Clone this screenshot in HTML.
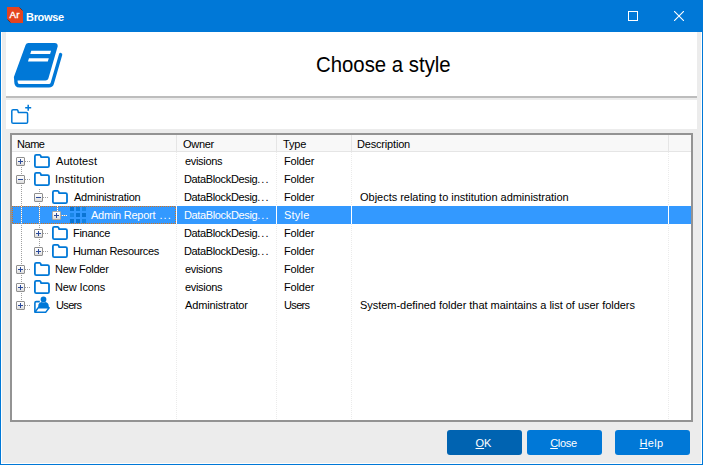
<!DOCTYPE html>
<html><head><meta charset="utf-8"><style>
*{margin:0;padding:0;box-sizing:border-box}
html,body{width:703px;height:465px;overflow:hidden;background:#ececec}
body{position:relative;font-family:"Liberation Sans",sans-serif;font-size:11px;color:#000}
.a{position:absolute}
#win{position:absolute;left:0;top:0;width:703px;height:465px;border:1px solid #0078d7;background:#ececec}
#tb{position:absolute;left:0;top:0;width:703px;height:32px;background:#0078d7}
.t{position:absolute;height:18px;line-height:18px;white-space:nowrap;color:#000}
.t.sel{color:#fff}
.h1{position:absolute;white-space:nowrap;line-height:17px;height:17px}
.ic{position:absolute;display:block}
.exp{position:absolute;width:9px;height:9px;border:1px solid #8f8f8f;border-radius:1px;background:linear-gradient(#ffffff,#f2f2f2 50%,#dcdcdc)}
.exp i{position:absolute;background:#2b4a9a;display:block}
.exp i.h{left:1px;top:3px;width:5px;height:1px}
.exp i.v{left:3px;top:1px;width:1px;height:5px}
.btn{position:absolute;top:430px;width:75px;height:25px;border-radius:3px;background:#0078d7;color:#fff;text-align:center;line-height:27px;font-size:11px}
.btn u{text-decoration:underline;text-underline-offset:1px}
</style></head><body>
<div id="win"></div>
<div id="tb"></div>
<div class="a" style="left:1px;top:32px;width:701px;height:432px;background:#fff"></div>
<div class="a" style="left:2px;top:32px;width:699px;height:431px;background:#ececec"></div>
<!-- header white -->
<div class="a" style="left:6px;top:32px;width:691px;height:64px;background:#fff"></div>
<div class="a" style="left:6px;top:96px;width:691px;height:2px;background:#bdbdbd"></div>
<div class="a" style="left:6px;top:98px;width:691px;height:2px;background:#ececec"></div>
<div class="a" style="left:6px;top:100px;width:691px;height:29px;background:#fff"></div>
<!-- title bar content -->
<svg class="ic" style="left:7px;top:7px" width="16" height="16" viewBox="0 0 16 16"><path d="M0 0 L12 0 L16 4 L16 16 L4 16 L0 12 Z" fill="#e4431f"/><path d="M12.5 0.5 L15.5 3.5 M0.5 12.5 L3.5 15.5" stroke="#3a1a10" stroke-width="0.7" opacity="0.8"/><text x="2.6" y="11.4" font-family="Liberation Sans" font-weight="normal" font-size="9.8" stroke="#fff" stroke-width="0.35" fill="#fff">Ar</text></svg>
<div class="a" style="left:26px;top:10px;color:#fff;font-weight:bold;font-size:11px;letter-spacing:-0.3px;line-height:14px">Browse</div>
<div class="a" style="left:628px;top:11px;width:10px;height:10px;border:1px solid #fff"></div>
<svg class="ic" style="left:674px;top:11px" width="10" height="10" viewBox="0 0 10 10"><path d="M0 0 L10 10 M10 0 L0 10" stroke="#fff" stroke-width="1.1"/></svg>
<!-- book icon -->
<svg class="ic" style="left:0px;top:32px" width="80" height="64" viewBox="0 32 80 64">
<path d="M28.4 46 L54.7 46 L45.5 77.6 L16.9 77.6 Z" fill="#0078d7" stroke="#0078d7" stroke-width="6" stroke-linejoin="round"/>
<path d="M60.6 54.6 L52.3 83.2 Q51.6 85.8 49 85.8 L19.5 85.8 Q15.9 85.8 15.9 81.5 L15.9 78" fill="none" stroke="#0078d7" stroke-width="3.4" stroke-linecap="round" stroke-linejoin="round"/>
<path d="M30.8 52.4 L50.6 52.4" stroke="#fff" stroke-width="3.2" stroke-linecap="butt" transform="skewX(-17) translate(16 0)"/>
<path d="M30.8 59.9 L50.6 59.9" stroke="#fff" stroke-width="3.2" stroke-linecap="butt" transform="skewX(-17) translate(16 0)"/>
</svg>
<div class="a" style="left:316px;top:52px;font-size:22.5px;transform:scaleX(0.905);transform-origin:0 0;line-height:26px;white-space:nowrap">Choose a style</div>
<!-- new folder icon -->
<svg class="ic" style="left:8px;top:100px" width="28" height="28" viewBox="0 0 28 28">
<path d="M3.8 11 Q3.8 9.7 5.1 9.7 L8.7 9.7 Q9.6 9.7 9.9 10.6 L10.3 12.4 L18.3 12.4 Q19.6 12.4 19.6 13.7 L19.6 21.9 Q19.6 23.2 18.3 23.2 L5.1 23.2 Q3.8 23.2 3.8 21.9 Z" fill="none" stroke="#0078d7" stroke-width="1.5" stroke-linejoin="round"/>
<path d="M17.2 7.8 L23.2 7.8 M20.2 4.8 L20.2 10.8" stroke="#0078d7" stroke-width="1.5"/>
</svg>
<!-- listbox -->
<div class="a" style="left:10px;top:133px;width:683px;height:289px;border:2px solid #939393;background:#fff"></div>
<div class="a" style="left:12px;top:135px;width:679px;height:16px;background:#f8f8f8"></div>
<div class="a" style="left:12px;top:151px;width:679px;height:1px;background:#e5e5e5"></div>
<div class="a" style="left:176px;top:135px;width:1px;height:17px;background:#e5e5e5"></div>
<div class="a" style="left:276px;top:135px;width:1px;height:17px;background:#e5e5e5"></div>
<div class="a" style="left:351px;top:135px;width:1px;height:17px;background:#e5e5e5"></div>
<div class="a" style="left:668px;top:135px;width:1px;height:17px;background:#e5e5e5"></div>
<div class="h1" style="left:17px;top:136px;letter-spacing:-0.467px">Name</div>
<div class="h1" style="left:183px;top:136px;letter-spacing:-0.3px">Owner</div>
<div class="h1" style="left:283px;top:136px;letter-spacing:-0.201px">Type</div>
<div class="h1" style="left:357px;top:136px;letter-spacing:-0.18px">Description</div>
<!-- column dotted lines -->
<div class="a" style="left:176px;top:152px;width:1px;height:268px;background:repeating-linear-gradient(#ebebeb 0 1px,transparent 1px 2px)"></div>
<div class="a" style="left:276px;top:152px;width:1px;height:268px;background:repeating-linear-gradient(#ebebeb 0 1px,transparent 1px 2px)"></div>
<div class="a" style="left:351px;top:152px;width:1px;height:268px;background:repeating-linear-gradient(#ebebeb 0 1px,transparent 1px 2px)"></div>
<div class="a" style="left:668px;top:152px;width:1px;height:268px;background:repeating-linear-gradient(#ebebeb 0 1px,transparent 1px 2px)"></div>
<!-- selection -->
<div class="a" style="left:12px;top:206px;width:679px;height:18px;background:#3399ff"></div>
<div class="a" style="left:176px;top:206px;width:1px;height:18px;background:#fff"></div>
<div class="a" style="left:276px;top:206px;width:1px;height:18px;background:#fff"></div>
<div class="a" style="left:351px;top:206px;width:1px;height:18px;background:#fff"></div>
<div class="a" style="left:668px;top:206px;width:1px;height:18px;background:#fff"></div>
<svg class="ic" style="left:0;top:0" width="703" height="465"><rect x="25" y="161" width="1" height="1" fill="#a0a0a0"/><rect x="27" y="161" width="1" height="1" fill="#a0a0a0"/><rect x="29" y="161" width="1" height="1" fill="#a0a0a0"/><rect x="25" y="179" width="1" height="1" fill="#a0a0a0"/><rect x="27" y="179" width="1" height="1" fill="#a0a0a0"/><rect x="29" y="179" width="1" height="1" fill="#a0a0a0"/><rect x="43" y="197" width="1" height="1" fill="#a0a0a0"/><rect x="45" y="197" width="1" height="1" fill="#a0a0a0"/><rect x="47" y="197" width="1" height="1" fill="#a0a0a0"/><rect x="61" y="215" width="1" height="1" fill="#a0a0a0"/><rect x="63" y="215" width="1" height="1" fill="#a0a0a0"/><rect x="65" y="215" width="1" height="1" fill="#a0a0a0"/><rect x="62" y="215" width="1" height="1" fill="#fff"/><rect x="64" y="215" width="1" height="1" fill="#fff"/><rect x="66" y="215" width="1" height="1" fill="#fff"/><rect x="43" y="233" width="1" height="1" fill="#a0a0a0"/><rect x="45" y="233" width="1" height="1" fill="#a0a0a0"/><rect x="47" y="233" width="1" height="1" fill="#a0a0a0"/><rect x="43" y="251" width="1" height="1" fill="#a0a0a0"/><rect x="45" y="251" width="1" height="1" fill="#a0a0a0"/><rect x="47" y="251" width="1" height="1" fill="#a0a0a0"/><rect x="25" y="269" width="1" height="1" fill="#a0a0a0"/><rect x="27" y="269" width="1" height="1" fill="#a0a0a0"/><rect x="29" y="269" width="1" height="1" fill="#a0a0a0"/><rect x="25" y="287" width="1" height="1" fill="#a0a0a0"/><rect x="27" y="287" width="1" height="1" fill="#a0a0a0"/><rect x="29" y="287" width="1" height="1" fill="#a0a0a0"/><rect x="25" y="305" width="1" height="1" fill="#a0a0a0"/><rect x="27" y="305" width="1" height="1" fill="#a0a0a0"/><rect x="29" y="305" width="1" height="1" fill="#a0a0a0"/><rect x="12" y="206" width="1" height="1" fill="#d4731c"/><rect x="13" y="223" width="1" height="1" fill="#d4731c"/><rect x="14" y="206" width="1" height="1" fill="#d4731c"/><rect x="15" y="223" width="1" height="1" fill="#d4731c"/><rect x="16" y="206" width="1" height="1" fill="#d4731c"/><rect x="17" y="223" width="1" height="1" fill="#d4731c"/><rect x="18" y="206" width="1" height="1" fill="#d4731c"/><rect x="19" y="223" width="1" height="1" fill="#d4731c"/><rect x="20" y="206" width="1" height="1" fill="#d4731c"/><rect x="21" y="223" width="1" height="1" fill="#d4731c"/><rect x="22" y="206" width="1" height="1" fill="#d4731c"/><rect x="23" y="223" width="1" height="1" fill="#d4731c"/><rect x="24" y="206" width="1" height="1" fill="#d4731c"/><rect x="25" y="223" width="1" height="1" fill="#d4731c"/><rect x="26" y="206" width="1" height="1" fill="#d4731c"/><rect x="27" y="223" width="1" height="1" fill="#d4731c"/><rect x="28" y="206" width="1" height="1" fill="#d4731c"/><rect x="29" y="223" width="1" height="1" fill="#d4731c"/><rect x="30" y="206" width="1" height="1" fill="#d4731c"/><rect x="31" y="223" width="1" height="1" fill="#d4731c"/><rect x="32" y="206" width="1" height="1" fill="#d4731c"/><rect x="33" y="223" width="1" height="1" fill="#d4731c"/><rect x="34" y="206" width="1" height="1" fill="#d4731c"/><rect x="35" y="223" width="1" height="1" fill="#d4731c"/><rect x="36" y="206" width="1" height="1" fill="#d4731c"/><rect x="37" y="223" width="1" height="1" fill="#d4731c"/><rect x="38" y="206" width="1" height="1" fill="#d4731c"/><rect x="39" y="223" width="1" height="1" fill="#d4731c"/><rect x="40" y="206" width="1" height="1" fill="#d4731c"/><rect x="41" y="223" width="1" height="1" fill="#d4731c"/><rect x="42" y="206" width="1" height="1" fill="#d4731c"/><rect x="43" y="223" width="1" height="1" fill="#d4731c"/><rect x="44" y="206" width="1" height="1" fill="#d4731c"/><rect x="45" y="223" width="1" height="1" fill="#d4731c"/><rect x="46" y="206" width="1" height="1" fill="#d4731c"/><rect x="47" y="223" width="1" height="1" fill="#d4731c"/><rect x="48" y="206" width="1" height="1" fill="#d4731c"/><rect x="49" y="223" width="1" height="1" fill="#d4731c"/><rect x="50" y="206" width="1" height="1" fill="#d4731c"/><rect x="51" y="223" width="1" height="1" fill="#d4731c"/><rect x="52" y="206" width="1" height="1" fill="#d4731c"/><rect x="53" y="223" width="1" height="1" fill="#d4731c"/><rect x="54" y="206" width="1" height="1" fill="#d4731c"/><rect x="55" y="223" width="1" height="1" fill="#d4731c"/><rect x="56" y="206" width="1" height="1" fill="#d4731c"/><rect x="57" y="223" width="1" height="1" fill="#d4731c"/><rect x="58" y="206" width="1" height="1" fill="#d4731c"/><rect x="59" y="223" width="1" height="1" fill="#d4731c"/><rect x="60" y="206" width="1" height="1" fill="#d4731c"/><rect x="61" y="223" width="1" height="1" fill="#d4731c"/><rect x="62" y="206" width="1" height="1" fill="#d4731c"/><rect x="63" y="223" width="1" height="1" fill="#d4731c"/><rect x="64" y="206" width="1" height="1" fill="#d4731c"/><rect x="65" y="223" width="1" height="1" fill="#d4731c"/><rect x="66" y="206" width="1" height="1" fill="#d4731c"/><rect x="67" y="223" width="1" height="1" fill="#d4731c"/><rect x="68" y="206" width="1" height="1" fill="#d4731c"/><rect x="69" y="223" width="1" height="1" fill="#d4731c"/><rect x="70" y="206" width="1" height="1" fill="#d4731c"/><rect x="71" y="223" width="1" height="1" fill="#d4731c"/><rect x="72" y="206" width="1" height="1" fill="#d4731c"/><rect x="73" y="223" width="1" height="1" fill="#d4731c"/><rect x="74" y="206" width="1" height="1" fill="#d4731c"/><rect x="75" y="223" width="1" height="1" fill="#d4731c"/><rect x="76" y="206" width="1" height="1" fill="#d4731c"/><rect x="77" y="223" width="1" height="1" fill="#d4731c"/><rect x="78" y="206" width="1" height="1" fill="#d4731c"/><rect x="79" y="223" width="1" height="1" fill="#d4731c"/><rect x="80" y="206" width="1" height="1" fill="#d4731c"/><rect x="81" y="223" width="1" height="1" fill="#d4731c"/><rect x="82" y="206" width="1" height="1" fill="#d4731c"/><rect x="83" y="223" width="1" height="1" fill="#d4731c"/><rect x="84" y="206" width="1" height="1" fill="#d4731c"/><rect x="85" y="223" width="1" height="1" fill="#d4731c"/><rect x="86" y="206" width="1" height="1" fill="#d4731c"/><rect x="87" y="223" width="1" height="1" fill="#d4731c"/><rect x="88" y="206" width="1" height="1" fill="#d4731c"/><rect x="89" y="223" width="1" height="1" fill="#d4731c"/><rect x="90" y="206" width="1" height="1" fill="#d4731c"/><rect x="91" y="223" width="1" height="1" fill="#d4731c"/><rect x="92" y="206" width="1" height="1" fill="#d4731c"/><rect x="93" y="223" width="1" height="1" fill="#d4731c"/><rect x="94" y="206" width="1" height="1" fill="#d4731c"/><rect x="95" y="223" width="1" height="1" fill="#d4731c"/><rect x="96" y="206" width="1" height="1" fill="#d4731c"/><rect x="97" y="223" width="1" height="1" fill="#d4731c"/><rect x="98" y="206" width="1" height="1" fill="#d4731c"/><rect x="99" y="223" width="1" height="1" fill="#d4731c"/><rect x="100" y="206" width="1" height="1" fill="#d4731c"/><rect x="101" y="223" width="1" height="1" fill="#d4731c"/><rect x="102" y="206" width="1" height="1" fill="#d4731c"/><rect x="103" y="223" width="1" height="1" fill="#d4731c"/><rect x="104" y="206" width="1" height="1" fill="#d4731c"/><rect x="105" y="223" width="1" height="1" fill="#d4731c"/><rect x="106" y="206" width="1" height="1" fill="#d4731c"/><rect x="107" y="223" width="1" height="1" fill="#d4731c"/><rect x="108" y="206" width="1" height="1" fill="#d4731c"/><rect x="109" y="223" width="1" height="1" fill="#d4731c"/><rect x="110" y="206" width="1" height="1" fill="#d4731c"/><rect x="111" y="223" width="1" height="1" fill="#d4731c"/><rect x="112" y="206" width="1" height="1" fill="#d4731c"/><rect x="113" y="223" width="1" height="1" fill="#d4731c"/><rect x="114" y="206" width="1" height="1" fill="#d4731c"/><rect x="115" y="223" width="1" height="1" fill="#d4731c"/><rect x="116" y="206" width="1" height="1" fill="#d4731c"/><rect x="117" y="223" width="1" height="1" fill="#d4731c"/><rect x="118" y="206" width="1" height="1" fill="#d4731c"/><rect x="119" y="223" width="1" height="1" fill="#d4731c"/><rect x="120" y="206" width="1" height="1" fill="#d4731c"/><rect x="121" y="223" width="1" height="1" fill="#d4731c"/><rect x="122" y="206" width="1" height="1" fill="#d4731c"/><rect x="123" y="223" width="1" height="1" fill="#d4731c"/><rect x="124" y="206" width="1" height="1" fill="#d4731c"/><rect x="125" y="223" width="1" height="1" fill="#d4731c"/><rect x="126" y="206" width="1" height="1" fill="#d4731c"/><rect x="127" y="223" width="1" height="1" fill="#d4731c"/><rect x="128" y="206" width="1" height="1" fill="#d4731c"/><rect x="129" y="223" width="1" height="1" fill="#d4731c"/><rect x="130" y="206" width="1" height="1" fill="#d4731c"/><rect x="131" y="223" width="1" height="1" fill="#d4731c"/><rect x="132" y="206" width="1" height="1" fill="#d4731c"/><rect x="133" y="223" width="1" height="1" fill="#d4731c"/><rect x="134" y="206" width="1" height="1" fill="#d4731c"/><rect x="135" y="223" width="1" height="1" fill="#d4731c"/><rect x="136" y="206" width="1" height="1" fill="#d4731c"/><rect x="137" y="223" width="1" height="1" fill="#d4731c"/><rect x="138" y="206" width="1" height="1" fill="#d4731c"/><rect x="139" y="223" width="1" height="1" fill="#d4731c"/><rect x="140" y="206" width="1" height="1" fill="#d4731c"/><rect x="141" y="223" width="1" height="1" fill="#d4731c"/><rect x="142" y="206" width="1" height="1" fill="#d4731c"/><rect x="143" y="223" width="1" height="1" fill="#d4731c"/><rect x="144" y="206" width="1" height="1" fill="#d4731c"/><rect x="145" y="223" width="1" height="1" fill="#d4731c"/><rect x="146" y="206" width="1" height="1" fill="#d4731c"/><rect x="147" y="223" width="1" height="1" fill="#d4731c"/><rect x="148" y="206" width="1" height="1" fill="#d4731c"/><rect x="149" y="223" width="1" height="1" fill="#d4731c"/><rect x="150" y="206" width="1" height="1" fill="#d4731c"/><rect x="151" y="223" width="1" height="1" fill="#d4731c"/><rect x="152" y="206" width="1" height="1" fill="#d4731c"/><rect x="153" y="223" width="1" height="1" fill="#d4731c"/><rect x="154" y="206" width="1" height="1" fill="#d4731c"/><rect x="155" y="223" width="1" height="1" fill="#d4731c"/><rect x="156" y="206" width="1" height="1" fill="#d4731c"/><rect x="157" y="223" width="1" height="1" fill="#d4731c"/><rect x="158" y="206" width="1" height="1" fill="#d4731c"/><rect x="159" y="223" width="1" height="1" fill="#d4731c"/><rect x="160" y="206" width="1" height="1" fill="#d4731c"/><rect x="161" y="223" width="1" height="1" fill="#d4731c"/><rect x="162" y="206" width="1" height="1" fill="#d4731c"/><rect x="163" y="223" width="1" height="1" fill="#d4731c"/><rect x="164" y="206" width="1" height="1" fill="#d4731c"/><rect x="165" y="223" width="1" height="1" fill="#d4731c"/><rect x="166" y="206" width="1" height="1" fill="#d4731c"/><rect x="167" y="223" width="1" height="1" fill="#d4731c"/><rect x="168" y="206" width="1" height="1" fill="#d4731c"/><rect x="169" y="223" width="1" height="1" fill="#d4731c"/><rect x="170" y="206" width="1" height="1" fill="#d4731c"/><rect x="171" y="223" width="1" height="1" fill="#d4731c"/><rect x="172" y="206" width="1" height="1" fill="#d4731c"/><rect x="173" y="223" width="1" height="1" fill="#d4731c"/><rect x="174" y="206" width="1" height="1" fill="#d4731c"/><rect x="175" y="223" width="1" height="1" fill="#d4731c"/><rect x="175" y="207" width="1" height="1" fill="#d4731c"/><rect x="12" y="208" width="1" height="1" fill="#d4731c"/><rect x="175" y="209" width="1" height="1" fill="#d4731c"/><rect x="12" y="210" width="1" height="1" fill="#d4731c"/><rect x="175" y="211" width="1" height="1" fill="#d4731c"/><rect x="12" y="212" width="1" height="1" fill="#d4731c"/><rect x="175" y="213" width="1" height="1" fill="#d4731c"/><rect x="12" y="214" width="1" height="1" fill="#d4731c"/><rect x="175" y="215" width="1" height="1" fill="#d4731c"/><rect x="12" y="216" width="1" height="1" fill="#d4731c"/><rect x="175" y="217" width="1" height="1" fill="#d4731c"/><rect x="12" y="218" width="1" height="1" fill="#d4731c"/><rect x="175" y="219" width="1" height="1" fill="#d4731c"/><rect x="12" y="220" width="1" height="1" fill="#d4731c"/><rect x="175" y="221" width="1" height="1" fill="#d4731c"/><rect x="12" y="222" width="1" height="1" fill="#d4731c"/><rect x="21" y="167" width="1" height="1" fill="#a0a0a0"/><rect x="21" y="169" width="1" height="1" fill="#a0a0a0"/><rect x="21" y="171" width="1" height="1" fill="#a0a0a0"/><rect x="21" y="173" width="1" height="1" fill="#a0a0a0"/><rect x="21" y="175" width="1" height="1" fill="#a0a0a0"/><rect x="21" y="177" width="1" height="1" fill="#a0a0a0"/><rect x="21" y="179" width="1" height="1" fill="#a0a0a0"/><rect x="21" y="181" width="1" height="1" fill="#a0a0a0"/><rect x="21" y="183" width="1" height="1" fill="#a0a0a0"/><rect x="21" y="185" width="1" height="1" fill="#a0a0a0"/><rect x="21" y="187" width="1" height="1" fill="#a0a0a0"/><rect x="21" y="189" width="1" height="1" fill="#a0a0a0"/><rect x="21" y="191" width="1" height="1" fill="#a0a0a0"/><rect x="21" y="193" width="1" height="1" fill="#a0a0a0"/><rect x="21" y="195" width="1" height="1" fill="#a0a0a0"/><rect x="21" y="197" width="1" height="1" fill="#a0a0a0"/><rect x="21" y="199" width="1" height="1" fill="#a0a0a0"/><rect x="21" y="201" width="1" height="1" fill="#a0a0a0"/><rect x="21" y="203" width="1" height="1" fill="#a0a0a0"/><rect x="21" y="205" width="1" height="1" fill="#a0a0a0"/><rect x="21" y="207" width="1" height="1" fill="#a0a0a0"/><rect x="21" y="209" width="1" height="1" fill="#a0a0a0"/><rect x="21" y="211" width="1" height="1" fill="#a0a0a0"/><rect x="21" y="213" width="1" height="1" fill="#a0a0a0"/><rect x="21" y="215" width="1" height="1" fill="#a0a0a0"/><rect x="21" y="217" width="1" height="1" fill="#a0a0a0"/><rect x="21" y="219" width="1" height="1" fill="#a0a0a0"/><rect x="21" y="221" width="1" height="1" fill="#a0a0a0"/><rect x="21" y="223" width="1" height="1" fill="#a0a0a0"/><rect x="21" y="225" width="1" height="1" fill="#a0a0a0"/><rect x="21" y="227" width="1" height="1" fill="#a0a0a0"/><rect x="21" y="229" width="1" height="1" fill="#a0a0a0"/><rect x="21" y="231" width="1" height="1" fill="#a0a0a0"/><rect x="21" y="233" width="1" height="1" fill="#a0a0a0"/><rect x="21" y="235" width="1" height="1" fill="#a0a0a0"/><rect x="21" y="237" width="1" height="1" fill="#a0a0a0"/><rect x="21" y="239" width="1" height="1" fill="#a0a0a0"/><rect x="21" y="241" width="1" height="1" fill="#a0a0a0"/><rect x="21" y="243" width="1" height="1" fill="#a0a0a0"/><rect x="21" y="245" width="1" height="1" fill="#a0a0a0"/><rect x="21" y="247" width="1" height="1" fill="#a0a0a0"/><rect x="21" y="249" width="1" height="1" fill="#a0a0a0"/><rect x="21" y="251" width="1" height="1" fill="#a0a0a0"/><rect x="21" y="253" width="1" height="1" fill="#a0a0a0"/><rect x="21" y="255" width="1" height="1" fill="#a0a0a0"/><rect x="21" y="257" width="1" height="1" fill="#a0a0a0"/><rect x="21" y="259" width="1" height="1" fill="#a0a0a0"/><rect x="21" y="261" width="1" height="1" fill="#a0a0a0"/><rect x="21" y="263" width="1" height="1" fill="#a0a0a0"/><rect x="21" y="265" width="1" height="1" fill="#a0a0a0"/><rect x="21" y="267" width="1" height="1" fill="#a0a0a0"/><rect x="21" y="269" width="1" height="1" fill="#a0a0a0"/><rect x="21" y="271" width="1" height="1" fill="#a0a0a0"/><rect x="21" y="273" width="1" height="1" fill="#a0a0a0"/><rect x="21" y="275" width="1" height="1" fill="#a0a0a0"/><rect x="21" y="277" width="1" height="1" fill="#a0a0a0"/><rect x="21" y="279" width="1" height="1" fill="#a0a0a0"/><rect x="21" y="281" width="1" height="1" fill="#a0a0a0"/><rect x="21" y="283" width="1" height="1" fill="#a0a0a0"/><rect x="21" y="285" width="1" height="1" fill="#a0a0a0"/><rect x="21" y="287" width="1" height="1" fill="#a0a0a0"/><rect x="21" y="289" width="1" height="1" fill="#a0a0a0"/><rect x="21" y="291" width="1" height="1" fill="#a0a0a0"/><rect x="21" y="293" width="1" height="1" fill="#a0a0a0"/><rect x="21" y="295" width="1" height="1" fill="#a0a0a0"/><rect x="21" y="297" width="1" height="1" fill="#a0a0a0"/><rect x="21" y="299" width="1" height="1" fill="#a0a0a0"/><rect x="21" y="206" width="1" height="1" fill="#fff"/><rect x="21" y="208" width="1" height="1" fill="#fff"/><rect x="21" y="210" width="1" height="1" fill="#fff"/><rect x="21" y="212" width="1" height="1" fill="#fff"/><rect x="21" y="214" width="1" height="1" fill="#fff"/><rect x="21" y="216" width="1" height="1" fill="#fff"/><rect x="21" y="218" width="1" height="1" fill="#fff"/><rect x="21" y="220" width="1" height="1" fill="#fff"/><rect x="21" y="222" width="1" height="1" fill="#fff"/><rect x="39" y="189" width="1" height="1" fill="#a0a0a0"/><rect x="39" y="191" width="1" height="1" fill="#a0a0a0"/><rect x="39" y="193" width="1" height="1" fill="#a0a0a0"/><rect x="39" y="195" width="1" height="1" fill="#a0a0a0"/><rect x="39" y="197" width="1" height="1" fill="#a0a0a0"/><rect x="39" y="199" width="1" height="1" fill="#a0a0a0"/><rect x="39" y="201" width="1" height="1" fill="#a0a0a0"/><rect x="39" y="203" width="1" height="1" fill="#a0a0a0"/><rect x="39" y="205" width="1" height="1" fill="#a0a0a0"/><rect x="39" y="207" width="1" height="1" fill="#a0a0a0"/><rect x="39" y="209" width="1" height="1" fill="#a0a0a0"/><rect x="39" y="211" width="1" height="1" fill="#a0a0a0"/><rect x="39" y="213" width="1" height="1" fill="#a0a0a0"/><rect x="39" y="215" width="1" height="1" fill="#a0a0a0"/><rect x="39" y="217" width="1" height="1" fill="#a0a0a0"/><rect x="39" y="219" width="1" height="1" fill="#a0a0a0"/><rect x="39" y="221" width="1" height="1" fill="#a0a0a0"/><rect x="39" y="223" width="1" height="1" fill="#a0a0a0"/><rect x="39" y="225" width="1" height="1" fill="#a0a0a0"/><rect x="39" y="227" width="1" height="1" fill="#a0a0a0"/><rect x="39" y="229" width="1" height="1" fill="#a0a0a0"/><rect x="39" y="231" width="1" height="1" fill="#a0a0a0"/><rect x="39" y="233" width="1" height="1" fill="#a0a0a0"/><rect x="39" y="235" width="1" height="1" fill="#a0a0a0"/><rect x="39" y="237" width="1" height="1" fill="#a0a0a0"/><rect x="39" y="239" width="1" height="1" fill="#a0a0a0"/><rect x="39" y="241" width="1" height="1" fill="#a0a0a0"/><rect x="39" y="243" width="1" height="1" fill="#a0a0a0"/><rect x="39" y="245" width="1" height="1" fill="#a0a0a0"/><rect x="39" y="206" width="1" height="1" fill="#fff"/><rect x="39" y="208" width="1" height="1" fill="#fff"/><rect x="39" y="210" width="1" height="1" fill="#fff"/><rect x="39" y="212" width="1" height="1" fill="#fff"/><rect x="39" y="214" width="1" height="1" fill="#fff"/><rect x="39" y="216" width="1" height="1" fill="#fff"/><rect x="39" y="218" width="1" height="1" fill="#fff"/><rect x="39" y="220" width="1" height="1" fill="#fff"/><rect x="39" y="222" width="1" height="1" fill="#fff"/><rect x="57" y="207" width="1" height="1" fill="#a0a0a0"/><rect x="57" y="209" width="1" height="1" fill="#a0a0a0"/><rect x="57" y="206" width="1" height="1" fill="#fff"/><rect x="57" y="208" width="1" height="1" fill="#fff"/><rect x="57" y="210" width="1" height="1" fill="#fff"/></svg>
<div class="exp" style="left:16px;top:157px"><i class="h"></i><i class="v"></i></div><svg class="ic" style="left:34px;top:154px" width="16" height="15" viewBox="0 0 16 15"><path d="M0.9 2.3 Q0.9 0.9 2.3 0.9 L5.6 0.9 Q6.4 0.9 6.7 1.8 L7 3.1 L13.6 3.1 Q15 3.1 15 4.5 L15 11.8 Q15 13.2 13.6 13.2 L2.3 13.2 Q0.9 13.2 0.9 11.8 Z" fill="none" stroke="#0078d7" stroke-width="1.8" stroke-linejoin="round"/></svg><div class="t" style="left:56px;top:152px;letter-spacing:0.085px">Autotest</div><div class="t" style="left:185px;top:152px;letter-spacing:-0.315px">evisions</div><div class="t" style="left:284px;top:152px;letter-spacing:-0.16px">Folder</div><div class="exp" style="left:16px;top:175px"><i class="h"></i></div><svg class="ic" style="left:34px;top:172px" width="16" height="15" viewBox="0 0 16 15"><path d="M0.9 2.3 Q0.9 0.9 2.3 0.9 L5.6 0.9 Q6.4 0.9 6.7 1.8 L7 3.1 L13.6 3.1 Q15 3.1 15 4.5 L15 11.8 Q15 13.2 13.6 13.2 L2.3 13.2 Q0.9 13.2 0.9 11.8 Z" fill="none" stroke="#0078d7" stroke-width="1.8" stroke-linejoin="round"/></svg><div class="t" style="left:55px;top:170px;letter-spacing:0.22px">Institution</div><div class="t" style="left:184px;top:170px;letter-spacing:-0.36px">DataBlockDesig<span style="letter-spacing:1.1px">...</span></div><div class="t" style="left:284px;top:170px;letter-spacing:-0.16px">Folder</div><div class="exp" style="left:34px;top:193px"><i class="h"></i></div><svg class="ic" style="left:52px;top:190px" width="16" height="15" viewBox="0 0 16 15"><path d="M0.9 2.3 Q0.9 0.9 2.3 0.9 L5.6 0.9 Q6.4 0.9 6.7 1.8 L7 3.1 L13.6 3.1 Q15 3.1 15 4.5 L15 11.8 Q15 13.2 13.6 13.2 L2.3 13.2 Q0.9 13.2 0.9 11.8 Z" fill="none" stroke="#0078d7" stroke-width="1.8" stroke-linejoin="round"/></svg><div class="t" style="left:74px;top:188px;letter-spacing:-0.23px">Administration</div><div class="t" style="left:184px;top:188px;letter-spacing:-0.36px">DataBlockDesig<span style="letter-spacing:1.1px">...</span></div><div class="t" style="left:284px;top:188px;letter-spacing:-0.16px">Folder</div><div class="t" style="left:360px;top:188px;letter-spacing:-0.022px">Objects relating to institution administration</div><div class="exp" style="left:52px;top:211px;border-color:#b4aca4"><i class="h"></i><i class="v"></i></div><svg class="ic" style="left:70px;top:207px" width="16" height="16" viewBox="0 0 16 16"><rect x="0" y="0" width="4" height="4" fill="#0a74d3"/><rect x="6" y="0" width="4" height="4" fill="#0f7cdb"/><rect x="12" y="0" width="4" height="4" fill="#1a87e6"/><rect x="0" y="6" width="4" height="4" fill="#1a87e6"/><rect x="6" y="6" width="4" height="4" fill="#0a74d3"/><rect x="12" y="6" width="4" height="4" fill="#0a74d3"/><rect x="0" y="12" width="4" height="4" fill="#0a74d3"/><rect x="6" y="12" width="4" height="4" fill="#0a74d3"/><rect x="12" y="12" width="4" height="4" fill="#1582e2"/></svg><div class="t sel" style="left:91px;top:206px;letter-spacing:-0.245px">Admin Report<span style="letter-spacing:1.1px"> ...</span></div><div class="t sel" style="left:184px;top:206px;letter-spacing:-0.36px">DataBlockDesig<span style="letter-spacing:1.1px">...</span></div><div class="t sel" style="left:284px;top:206px;letter-spacing:0.2px">Style</div><div class="exp" style="left:34px;top:229px"><i class="h"></i><i class="v"></i></div><svg class="ic" style="left:52px;top:226px" width="16" height="15" viewBox="0 0 16 15"><path d="M0.9 2.3 Q0.9 0.9 2.3 0.9 L5.6 0.9 Q6.4 0.9 6.7 1.8 L7 3.1 L13.6 3.1 Q15 3.1 15 4.5 L15 11.8 Q15 13.2 13.6 13.2 L2.3 13.2 Q0.9 13.2 0.9 11.8 Z" fill="none" stroke="#0078d7" stroke-width="1.8" stroke-linejoin="round"/></svg><div class="t" style="left:73px;top:224px;letter-spacing:-0.3px">Finance</div><div class="t" style="left:184px;top:224px;letter-spacing:-0.36px">DataBlockDesig<span style="letter-spacing:1.1px">...</span></div><div class="t" style="left:284px;top:224px;letter-spacing:-0.16px">Folder</div><div class="exp" style="left:34px;top:247px"><i class="h"></i><i class="v"></i></div><svg class="ic" style="left:52px;top:244px" width="16" height="15" viewBox="0 0 16 15"><path d="M0.9 2.3 Q0.9 0.9 2.3 0.9 L5.6 0.9 Q6.4 0.9 6.7 1.8 L7 3.1 L13.6 3.1 Q15 3.1 15 4.5 L15 11.8 Q15 13.2 13.6 13.2 L2.3 13.2 Q0.9 13.2 0.9 11.8 Z" fill="none" stroke="#0078d7" stroke-width="1.8" stroke-linejoin="round"/></svg><div class="t" style="left:73px;top:242px;letter-spacing:-0.342px">Human Resources</div><div class="t" style="left:184px;top:242px;letter-spacing:-0.36px">DataBlockDesig<span style="letter-spacing:1.1px">...</span></div><div class="t" style="left:284px;top:242px;letter-spacing:-0.16px">Folder</div><div class="exp" style="left:16px;top:265px"><i class="h"></i><i class="v"></i></div><svg class="ic" style="left:34px;top:262px" width="16" height="15" viewBox="0 0 16 15"><path d="M0.9 2.3 Q0.9 0.9 2.3 0.9 L5.6 0.9 Q6.4 0.9 6.7 1.8 L7 3.1 L13.6 3.1 Q15 3.1 15 4.5 L15 11.8 Q15 13.2 13.6 13.2 L2.3 13.2 Q0.9 13.2 0.9 11.8 Z" fill="none" stroke="#0078d7" stroke-width="1.8" stroke-linejoin="round"/></svg><div class="t" style="left:55px;top:260px;letter-spacing:-0.266px">New Folder</div><div class="t" style="left:185px;top:260px;letter-spacing:-0.315px">evisions</div><div class="t" style="left:284px;top:260px;letter-spacing:-0.16px">Folder</div><div class="exp" style="left:16px;top:283px"><i class="h"></i><i class="v"></i></div><svg class="ic" style="left:34px;top:280px" width="16" height="15" viewBox="0 0 16 15"><path d="M0.9 2.3 Q0.9 0.9 2.3 0.9 L5.6 0.9 Q6.4 0.9 6.7 1.8 L7 3.1 L13.6 3.1 Q15 3.1 15 4.5 L15 11.8 Q15 13.2 13.6 13.2 L2.3 13.2 Q0.9 13.2 0.9 11.8 Z" fill="none" stroke="#0078d7" stroke-width="1.8" stroke-linejoin="round"/></svg><div class="t" style="left:55px;top:278px;letter-spacing:-0.124px">New Icons</div><div class="t" style="left:185px;top:278px;letter-spacing:-0.315px">evisions</div><div class="t" style="left:284px;top:278px;letter-spacing:-0.16px">Folder</div><div class="exp" style="left:16px;top:301px"><i class="h"></i><i class="v"></i></div><svg class="ic" style="left:28px;top:292px" width="28" height="24" viewBox="0 0 28 24"><path d="M6.9 20.2 L6.9 10.9 Q6.9 9.6 8.2 9.6 L11.8 9.6" fill="none" stroke="#0078d7" stroke-width="1.6" stroke-linejoin="round"/><path d="M10.2 15.8 L10.2 14.2 Q10.2 9.7 15.5 9.7 Q20.8 9.7 20.8 14.2 L20.8 15.8 Z" fill="#0078d7"/><circle cx="15.5" cy="7.5" r="3.25" fill="#fff" opacity="0.6"/><circle cx="15.5" cy="7.4" r="2.85" fill="#0078d7"/><path d="M6.9 20.25 L10.2 15.75 L21.2 15.75 L17.7 20.25 Z" fill="#fff" stroke="#0078d7" stroke-width="1.4" stroke-linejoin="round"/></svg><div class="t" style="left:56px;top:296px;letter-spacing:-0.65px">Users</div><div class="t" style="left:185px;top:296px;letter-spacing:-0.15px">Administrator</div><div class="t" style="left:284px;top:296px;letter-spacing:-0.65px">Users</div><div class="t" style="left:360px;top:296px;letter-spacing:-0.034px">System-defined folder that maintains a list of user folders</div>
<!-- buttons -->
<div class="btn" style="left:447px;background:#0063b1;padding-right:2px"><u>O</u>K</div>
<div class="btn" style="left:527px;padding-right:2px;letter-spacing:-0.3px"><u>C</u>lose</div>
<div class="btn" style="left:615px;padding-right:2px;letter-spacing:0.3px"><u>H</u>elp</div>
</body></html>
